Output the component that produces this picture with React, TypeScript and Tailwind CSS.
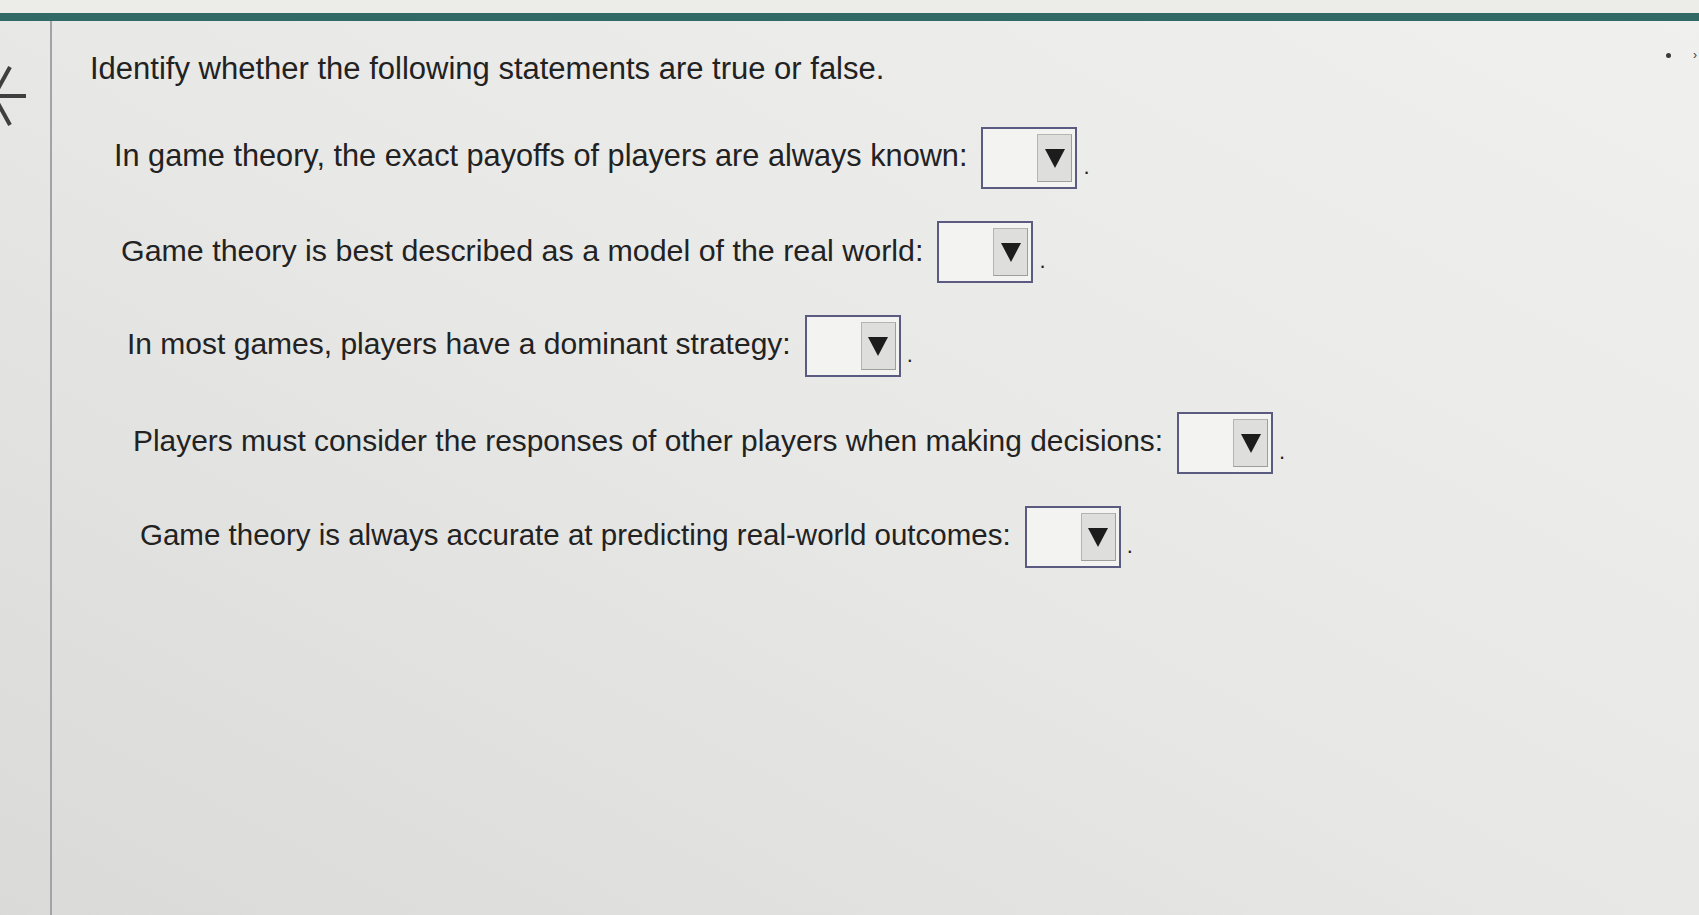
import React from 'react';

const statements = [
  { text: 'In game theory, the exact payoffs of players are always known:', row: 'ml-[24px]', size: 'text-[30.7px]' },
  { text: 'Game theory is best described as a model of the real world:', row: 'ml-[31px]', size: 'text-[30.4px]' },
  { text: 'In most games, players have a dominant strategy:', row: 'ml-[37px]', size: 'text-[30px]' },
  { text: 'Players must consider the responses of other players when making decisions:', row: 'ml-[43px] mt-[3px]', size: 'text-[29.9px]' },
  { text: 'Game theory is always accurate at predicting real-world outcomes:', row: 'ml-[50px]', size: 'text-[29.5px]' },
];

// dropdown box with the little grey arrow button on the right
const Dropdown = () => (
  <div className="flex h-[62px] w-[96px] items-center justify-end border-2 border-[#5b5b82] bg-[#f3f3f1] pr-[3px]">
    <div className="flex h-[48px] w-[35px] items-center justify-center border border-[#b4b4b2] border-b-[#9d9d9b] border-r-[#9d9d9b] bg-[#dededc]">
      <svg width="22" height="22" viewBox="0 0 22 22">
        <polygon points="1,2 21,2 11,21" fill="#1c1c1c" />
      </svg>
    </div>
  </div>
);

export default function App() {
  return (
    <div
      className="flex h-[915px] w-full flex-col overflow-hidden bg-linear-to-bl from-[#f0f0ee] via-[#e8e8e6] to-[#dadad9] text-[#222222]"
      style={{ fontFamily: '"Liberation Sans", Arial, sans-serif' }}
    >
      <div className="h-[13px] bg-[#ecece9]" />
      <div className="h-[8px] bg-[#2f6a66]" />

      <div className="relative flex flex-1">
        {/* left rail */}
        <div className="w-[52px] shrink-0 border-r-2 border-[#a2a2a8] pt-[47px]">
          <svg width="30" height="60" viewBox="0 0 30 60" className="overflow-visible">
            <path d="M10 -1 L-6 28 L10 57 M-2 28 L26 28" stroke="#3f3f3f" strokeWidth="4" fill="none" />
          </svg>
        </div>

        {/* top-right corner marks */}
        <div className="absolute right-[2px] top-[28px] flex items-center gap-[22px]">
          <div className="h-[5px] w-[5px] rounded-full bg-[#3a3a3a]" />
          <span className="text-[12px] leading-none text-[#3a3a3a]">›</span>
        </div>

        <div className="flex flex-col pl-[38px] pt-[31px]">
          <p className="text-[31px] leading-[34px]">
            Identify whether the following statements are true or false.
          </p>

          <div className="mt-[41px] flex flex-col gap-[32px]">
            {statements.map((s) => (
              <div key={s.text} className={`flex h-[62px] items-center ${s.row}`}>
                <span className={`mb-[4px] leading-[34px] ${s.size}`}>{s.text}</span>
                <div className="ml-[14px]">
                  <Dropdown />
                </div>
                <span className="ml-[6px] mt-[18px] text-[22px] leading-none">.</span>
              </div>
            ))}
          </div>
        </div>
      </div>
    </div>
  );
}
